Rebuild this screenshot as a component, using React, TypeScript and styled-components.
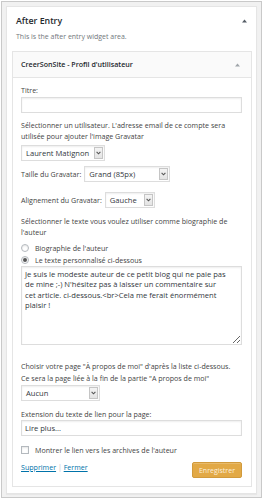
import React from "react";
import styled, { createGlobalStyle } from "styled-components";

const GlobalStyle = createGlobalStyle`
  html, body {
    margin: 0;
    padding: 0;
    background: #ffffff;
  }
  body {
    font-family: "Open Sans", "DejaVu Sans", sans-serif;
    color: #444444;
  }
  * {
    box-sizing: border-box;
  }
`;

// gray page area with the thin screenshot frame around it
const Frame = styled.div`
  margin: 1px 0 0 1px;
  width: 261px;
  height: 497px;
  border: 1px solid #c9c9c9;
  background: #f1f1f1;
  padding: 4px 4px 0 4px;
`;

const Sidebar = styled.div`
  width: 251px;
  background: #ffffff;
  border: 1px solid #e5e5e5;
  box-shadow: 0 1px 1px rgba(0, 0, 0, 0.04);
  padding: 0 4px 6px 5px;
`;

const SidebarHeader = styled.div`
  display: flex;
  align-items: center;
  justify-content: space-between;
  padding: 8px 5px 0 4px;
`;

const SidebarTitle = styled.h2`
  margin: 0;
  font-size: 8.8px;
  line-height: 12px;
  font-weight: 600;
  color: #23282d;
`;

const SidebarDescription = styled.p`
  margin: 4px 0 0 4px;
  font-size: 7px;
  line-height: 11px;
  color: #72777c;
`;

const Toggle = styled.svg<{ dark?: boolean }>`
  display: block;
  fill: ${(p) => (p.dark ? "#555d66" : "#a0a5aa")};
`;

const Widget = styled.div`
  margin-top: 9px;
  width: 240px;
  border: 1px solid #e5e5e5;
  background: #ffffff;
`;

const WidgetTop = styled.div`
  display: flex;
  align-items: center;
  justify-content: space-between;
  height: 26px;
  padding: 0 11px 0 8px;
  background: #fafafa;
  border-bottom: 1px solid #e5e5e5;
`;

const WidgetTitle = styled.h3`
  margin: 0;
  font-size: 7.1px;
  line-height: 11px;
  font-weight: 600;
  color: #23282d;
`;

const WidgetInside = styled.div`
  display: flex;
  flex-direction: column;
  align-items: flex-start;
  padding: 7px 8px 8px 8px;
`;

const Label = styled.p<{ mt?: number; lh?: number }>`
  margin: ${(p) => p.mt ?? 0}px 0 0 0;
  font-size: 7.1px;
  line-height: ${(p) => p.lh ?? 11}px;
  color: #444444;
  white-space: nowrap;
`;

const TextInput = styled.input<{ mt?: number }>`
  display: block;
  margin: ${(p) => p.mt ?? 0}px 0 0 0;
  width: 221px;
  height: 16px;
  padding: 0 3px;
  border: 1px solid #dddddd;
  box-shadow: inset 0 1px 2px rgba(0, 0, 0, 0.07);
  font-family: "Open Sans", sans-serif;
  font-size: 7.6px;
  color: #32373c;
  outline: none;
  background: #ffffff;
`;

const SelectBox = styled.div<{ w: number; mt?: number }>`
  display: flex;
  align-items: stretch;
  width: ${(p) => p.w}px;
  height: 16px;
  margin-top: ${(p) => p.mt ?? 0}px;
  border: 1px solid #dddddd;
  box-shadow: inset 0 1px 2px rgba(0, 0, 0, 0.07);
  background: #ffffff;
  flex-shrink: 0;
`;

const SelectValue = styled.span`
  flex: 1;
  padding-left: 4px;
  font-size: 7.6px;
  line-height: 14px;
  color: #32373c;
  white-space: nowrap;
  overflow: hidden;
`;

const SelectArrow = styled.span`
  display: flex;
  align-items: center;
  justify-content: center;
  width: 9px;
  margin: 1px 1px 1px 0;
  border: 1px solid #c5c5c5;
  background: linear-gradient(#f4f4f4, #e4e4e4);
`;

const InlineRow = styled.div<{ mt: number }>`
  display: flex;
  align-items: center;
  gap: 3px;
  margin-top: ${(p) => p.mt}px;
`;

const ChoiceRow = styled.label<{ mt: number }>`
  display: flex;
  align-items: center;
  gap: 6px;
  height: 11px;
  margin-top: ${(p) => p.mt}px;
  font-size: 7.1px;
  color: #444444;
  white-space: nowrap;
`;

const Radio = styled.span<{ checked?: boolean }>`
  display: flex;
  align-items: center;
  justify-content: center;
  width: 8px;
  height: 8px;
  border: 1px solid #b4b9be;
  border-radius: 50%;
  background: #ffffff;
  box-shadow: inset 0 1px 2px rgba(0, 0, 0, 0.1);
  &::after {
    content: "";
    display: ${(p) => (p.checked ? "block" : "none")};
    width: 4px;
    height: 4px;
    border-radius: 50%;
    background: #555555;
  }
`;

const Checkbox = styled.span`
  display: block;
  width: 8px;
  height: 8px;
  border: 1px solid #b4b9be;
  background: #ffffff;
  box-shadow: inset 0 1px 2px rgba(0, 0, 0, 0.1);
`;

const BioArea = styled.textarea`
  display: block;
  margin-top: 1px;
  width: 221px;
  height: 79px;
  padding: 2px 3px;
  border: 1px solid #dddddd;
  box-shadow: inset 0 1px 2px rgba(0, 0, 0, 0.07);
  font-family: "Open Sans", sans-serif;
  font-size: 7.6px;
  line-height: 10.4px;
  color: #32373c;
  white-space: pre-wrap;
  overflow: hidden;
  resize: vertical;
  outline: none;
`;

const Controls = styled.div`
  display: flex;
  align-items: flex-start;
  justify-content: space-between;
  width: 221px;
  margin-top: 7px;
`;

const Links = styled.div`
  font-size: 7.1px;
  line-height: 11px;
  color: #c3c4c7;
`;

const Link = styled.a`
  color: #0073aa;
  text-decoration: underline;
`;

const SaveButton = styled.button`
  width: 50px;
  height: 16px;
  padding: 0;
  border: 1px solid #d19a3c;
  border-radius: 2px;
  background: #e2a946;
  font-family: "Open Sans", sans-serif;
  font-size: 7px;
  color: #fcefdc;
  box-shadow: inset 0 1px 0 rgba(255, 255, 255, 0.2);
`;

const UpArrow = ({ dark }: { dark?: boolean }) => (
  <Toggle dark={dark} width="5" height="4" viewBox="0 0 5 4">
    <polygon points="2.5,0.5 5,3.5 0,3.5" />
  </Toggle>
);

const Chevron = () => (
  <svg width="5" height="4" viewBox="0 0 5 4">
    <polyline points="0.6,0.8 2.5,2.8 4.4,0.8" fill="none" stroke="#555" strokeWidth="1.1" />
  </svg>
);

const Select = ({ value, w, mt }: { value: string; w: number; mt?: number }) => (
  <SelectBox w={w} mt={mt}>
    <SelectValue>{value}</SelectValue>
    <SelectArrow>
      <Chevron />
    </SelectArrow>
  </SelectBox>
);

const bio =
  "Je suis le modeste auteur de ce petit blog qui ne paie pas\nde mine ;-) N'hésitez pas à laisser un commentaire sur\ncet article. ci-dessous.<br>Cela me ferait énormément\nplaisir !";

const App = () => (
  <>
    <GlobalStyle />
    <Frame>
      <Sidebar>
        <SidebarHeader>
          <SidebarTitle>After Entry</SidebarTitle>
          <UpArrow dark />
        </SidebarHeader>
        <SidebarDescription>This is the after entry widget area.</SidebarDescription>
        <Widget>
          <WidgetTop>
            <WidgetTitle>CreerSonSite - Profil d'utilisateur</WidgetTitle>
            <UpArrow />
          </WidgetTop>
          <WidgetInside>
            <Label>Titre:</Label>
            <TextInput mt={1} defaultValue="" />
            <Label mt={7}>
              Sélectionner un utilisateur. L'adresse email de ce compte sera
              <br />
              utilisée pour ajouter l'image Gravatar
            </Label>
            <Select value="Laurent Matignon" w={84} mt={3} />
            <InlineRow mt={5}>
              <Label>Taille du Gravatar:</Label>
              <Select value="Grand (85px)" w={86} />
            </InlineRow>
            <InlineRow mt={10}>
              <Label>Alignement du Gravatar:</Label>
              <Select value="Gauche" w={50} />
            </InlineRow>
            <Label mt={8}>
              Sélectionner le texte vous voulez utiliser comme biographie de
              <br />
              l'auteur
            </Label>
            <ChoiceRow mt={4}>
              <Radio />
              Biographie de l'auteur
            </ChoiceRow>
            <ChoiceRow mt={1}>
              <Radio checked />
              Le texte personnalisé ci-dessous
            </ChoiceRow>
            <BioArea defaultValue={bio} />
            <Label mt={15} lh={12}>
              Choisir votre page "À propos de moi" d'après la liste ci-dessous.
              <br />
              Ce sera la page liée à la fin de la partie "A propos de moi"
            </Label>
            <Select value="Aucun" w={79} mt={1} />
            <Label mt={8}>Extension du texte de lien pour la page:</Label>
            <TextInput defaultValue="Lire plus..." />
            <ChoiceRow mt={8}>
              <Checkbox />
              Montrer le lien vers les archives de l'auteur
            </ChoiceRow>
            <Controls>
              <Links>
                <Link href="#">Supprimer</Link> | <Link href="#">Fermer</Link>
              </Links>
              <SaveButton>Enregistrer</SaveButton>
            </Controls>
          </WidgetInside>
        </Widget>
      </Sidebar>
    </Frame>
  </>
);

export default App;
